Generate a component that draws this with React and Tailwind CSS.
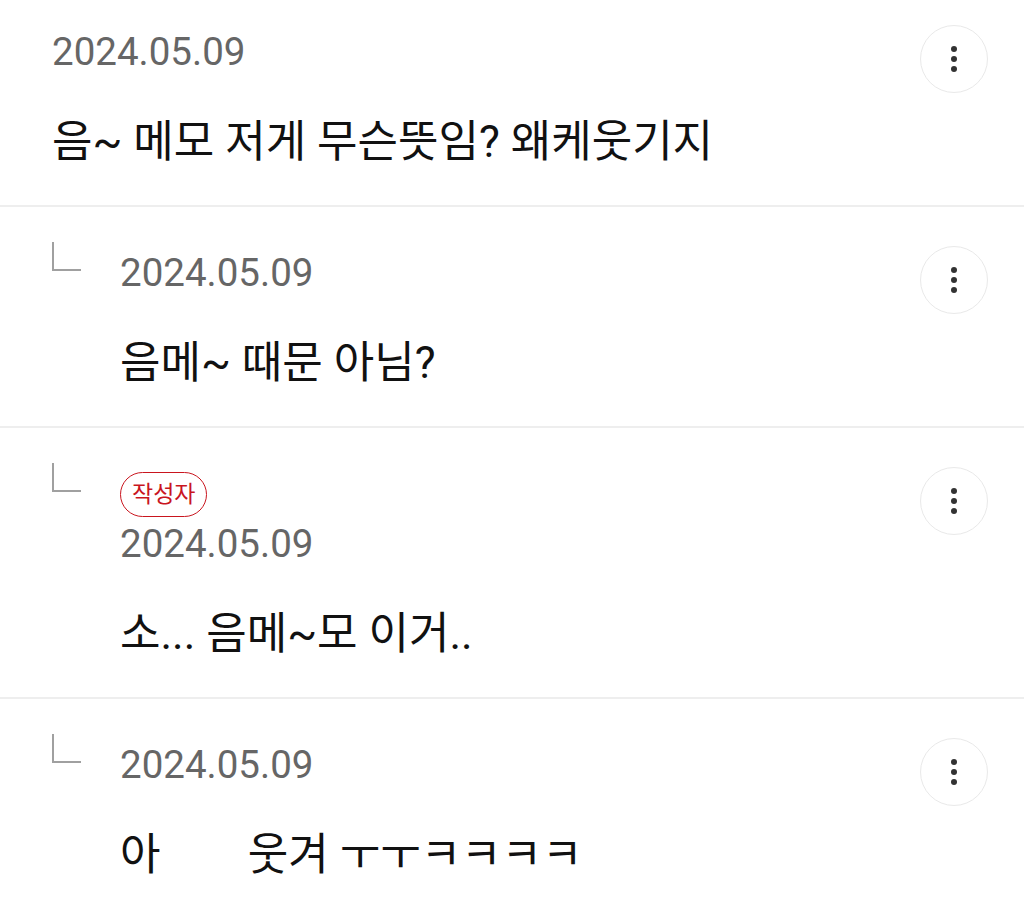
import { useState } from "react";

const comments = [
  { id: 1, date: "2024.05.09", text: "음~ 메모 저게 무슨뜻임? 왜케웃기지", reply: false },
  { id: 2, date: "2024.05.09", text: "음메~ 때문 아님?", reply: true },
  { id: 3, date: "2024.05.09", text: "소... 음메~모 이거..", reply: true, author: true },
  { id: 4, date: "2024.05.09", text: "아        웃겨 ㅜㅜㅋㅋㅋㅋ", reply: true },
];

function MoreButton() {
  return (
    <button className="mt-[4px] flex h-[68px] w-[68px] shrink-0 flex-col items-center justify-center gap-[4px] rounded-full border-[1.5px] border-[#e9e9e9] bg-white">
      <span className="h-[6px] w-[6px] rounded-full bg-[#333]"></span>
      <span className="h-[6px] w-[6px] rounded-full bg-[#333]"></span>
      <span className="h-[6px] w-[6px] rounded-full bg-[#333]"></span>
    </button>
  );
}

function CommentRow({ comment, first }) {
  return (
    <div
      className={`flex items-start border-b-[2px] border-[#eeeeee] pl-[52px] pr-[36px] pb-[37px] ${
        first ? "pt-[21px]" : "pt-[35px]"
      }`}
    >
      {comment.reply && (
        <div className="w-[68px] shrink-0">
          <div className="h-[29px] w-[29px] border-b-[2.5px] border-l-[2.5px] border-[#a0a0a0]"></div>
        </div>
      )}
      <div className="mt-[9px] min-w-0 flex-1">
        {comment.author && (
          <div className="mb-[5px] flex h-[45px] w-fit items-center rounded-full border-[1.5px] border-[#c9151e] px-[11px] text-[23px] leading-none text-[#c9151e]">
            작성자
          </div>
        )}
        <div className="text-[38.5px] leading-[44px] text-[#666666]">{comment.date}</div>
        <div className="mt-[42px] whitespace-pre text-[44px] leading-[52px] text-[#111111]">
          {comment.text}
        </div>
      </div>
      <MoreButton />
    </div>
  );
}

export default function App() {
  const [items] = useState(comments);

  return (
    <div
      className="min-h-[916px] w-[1024px] overflow-hidden bg-white"
      style={{ fontFamily: 'Roboto, "Noto Sans CJK KR", sans-serif' }}
    >
      {items.map((c, i) => (
        <CommentRow key={c.id} comment={c} first={i === 0} />
      ))}
    </div>
  );
}
